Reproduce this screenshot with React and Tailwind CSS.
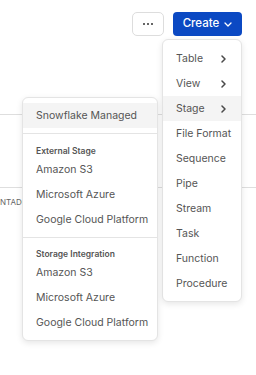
import React from 'react';

const mainItems = [
  { label: 'Table', sub: true },
  { label: 'View', sub: true },
  { label: 'Stage', sub: true, active: true },
  { label: 'File Format' },
  { label: 'Sequence' },
  { label: 'Pipe' },
  { label: 'Stream' },
  { label: 'Task' },
  { label: 'Function' },
  { label: 'Procedure' },
];

const ChevronRight = () => (
  <svg width="5" height="8" viewBox="0 0 5 8" fill="none">
    <path d="M1 1l3 3-3 3" stroke="#4a4a4a" strokeWidth="1.5" strokeLinecap="round" strokeLinejoin="round" />
  </svg>
);

const ChevronDown = () => (
  <svg width="8" height="5" viewBox="0 0 8 5" fill="none">
    <path d="M1 1l3 3 3-3" stroke="#ffffff" strokeWidth="1.3" strokeLinecap="round" strokeLinejoin="round" />
  </svg>
);

const SubItem = ({ children, active }) => (
  <div className={`h-[25px] px-[13px] flex items-center text-[10.5px] text-[#555] ${active ? 'bg-[#f4f4f4]' : ''}`}>
    {children}
  </div>
);

const App = () => {
  return (
    <div className="relative w-full h-[375px] bg-white overflow-hidden font-['Inter',sans-serif]">
      {/* toolbar */}
      <div className="flex justify-end items-center gap-[9px] pt-3 pr-[14px]">
        <button className="w-[32px] h-[24px] rounded-[5px] border border-[#dddddd] bg-white flex items-center justify-center gap-[2px]">
          <span className="w-[2px] h-[2px] rounded-full bg-[#333]" />
          <span className="w-[2px] h-[2px] rounded-full bg-[#333]" />
          <span className="w-[2px] h-[2px] rounded-full bg-[#333]" />
        </button>
        <button className="w-[69px] h-[24px] rounded-[4px] bg-[#0b49c3] text-white text-[11.5px] font-medium flex items-center justify-center gap-[5px]">
          Create
          <ChevronDown />
        </button>
      </div>

      {/* table behind the menus */}
      <div className="mt-[78px] border-b border-[#dedede]" />
      <div className="h-[73px] border-b border-[#dedede]" />
      <div className="pt-[9px] text-[8px] leading-[10px] text-[#666] whitespace-nowrap">NTADOR</div>

      {/* Create menu */}
      <div className="absolute left-[162px] top-[39px] w-[80px] rounded-[6px] border border-[#e4e4e4] bg-white pt-[6px] pb-[5px] shadow-[0_2px_6px_rgba(0,0,0,0.1)]">
        {mainItems.map((item) => (
          <div
            key={item.label}
            className={`h-[25px] pl-[13px] pr-[15px] flex items-center justify-between text-[10.5px] text-[#555] whitespace-nowrap ${item.active ? 'bg-[#f4f4f4]' : ''}`}
          >
            <span>{item.label}</span>
            {item.sub && <ChevronRight />}
          </div>
        ))}
      </div>

      {/* Stage submenu */}
      <div className="absolute left-[22px] top-[97px] w-[136px] rounded-[6px] border border-[#e4e4e4] bg-white pt-[5px] pb-[5px] shadow-[0_2px_6px_rgba(0,0,0,0.1)] whitespace-nowrap">
        <SubItem active>Snowflake Managed</SubItem>
        <div className="mt-[5px] border-t border-[#e4e4e4]" />
        <div className="pt-[11px] px-[13px] text-[8.5px] leading-[12px] font-semibold text-[#555]">External Stage</div>
        <SubItem>Amazon S3</SubItem>
        <SubItem>Microsoft Azure</SubItem>
        <SubItem>Google Cloud Platform</SubItem>
        <div className="mt-[5px] border-t border-[#e4e4e4]" />
        <div className="pt-[10px] px-[13px] text-[8.5px] leading-[12px] font-semibold text-[#555]">Storage Integration</div>
        <SubItem>Amazon S3</SubItem>
        <SubItem>Microsoft Azure</SubItem>
        <SubItem>Google Cloud Platform</SubItem>
      </div>
    </div>
  );
};

export default App;
